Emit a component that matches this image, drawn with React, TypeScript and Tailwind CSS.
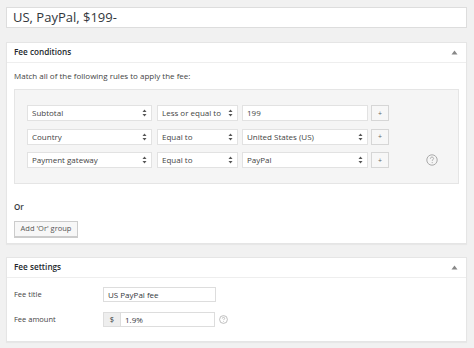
import React from "react";

const font = { fontFamily: '"Open Sans", "Liberation Sans", sans-serif' };

function UpDown() {
  return (
    <svg width="5" height="8" viewBox="0 0 5 8" className="shrink-0">
      <path d="M2.5 0.5 L4.5 3 L0.5 3 Z" fill="#555" />
      <path d="M2.5 7.5 L4.5 5 L0.5 5 Z" fill="#555" />
    </svg>
  );
}

function Caret() {
  return (
    <svg width="7" height="5" viewBox="0 0 7 5">
      <path d="M3.5 0.5 L6.5 4.5 L0.5 4.5 Z" fill="#888" />
    </svg>
  );
}

function Help({ size = 11 }: { size?: number }) {
  return (
    <svg width={size} height={size} viewBox="0 0 12 12">
      <circle cx="6" cy="6" r="5.2" fill="none" stroke="#aaa" strokeWidth="1" />
      <path d="M4.4 4.7 C4.4 3.6 5.1 3.1 6 3.1 C6.9 3.1 7.6 3.7 7.6 4.5 C7.6 5.5 6.2 5.6 6.2 6.8" fill="none" stroke="#aaa" strokeWidth="1" />
      <circle cx="6.2" cy="8.6" r="0.6" fill="#aaa" />
    </svg>
  );
}

function Select({ label, w }: { label: string; w: string }) {
  return (
    <div className={`${w} h-[16px] flex items-center justify-between bg-white border border-[#e2e2e2] pl-[4px] pr-[4px] text-[8px] text-[#444] whitespace-nowrap`}>
      <span>{label}</span>
      <UpDown />
    </div>
  );
}

function PlusBtn() {
  return (
    <div className="w-[18px] h-[16px] flex items-center justify-center bg-[#f7f7f7] border border-[#d6d6d6] text-[7px] text-[#666] leading-none">
      +
    </div>
  );
}

function PanelHeader({ title }: { title: string }) {
  return (
    <div className="h-[20px] flex items-center justify-between pl-[7px] pr-[8px] border-b border-[#eee]">
      <span className="text-[8.2px] font-semibold text-[#23282d]">{title}</span>
      <Caret />
    </div>
  );
}

export default function App() {
  return (
    <div style={font} className="w-[474px] h-[348px] bg-[#f1f1f1] pt-[7px] pl-[6px] pr-[7px] overflow-hidden text-[#444]">
      <div className="h-[21px] bg-white border border-[#ddd] flex items-center pl-[6px] text-[13px] text-[#32373c] leading-none">
        US, PayPal, $199-
      </div>

      <div className="mt-[14px] bg-white border border-[#e5e5e5] shadow-[0_1px_1px_rgba(0,0,0,0.04)]">
        <PanelHeader title="Fee conditions" />
        <div className="px-[7px] pb-[6px]">
          <div className="h-[26px] flex items-center text-[8px]">Match all of the following rules to apply the fee:</div>
          <div className="bg-[#f5f5f5] border border-[#e5e5e5] pl-[12px] pt-[15px] pb-[15px] flex flex-col gap-[7.5px]">
            <div className="flex items-center">
              <Select label="Subtotal" w="w-[125px]" />
              <div className="w-[5px]" />
              <Select label="Less or equal to" w="w-[81px]" />
              <div className="w-[4px]" />
              <div className="w-[126px] h-[16px] flex items-center bg-white border border-[#e2e2e2] pl-[4px] text-[8px]">199</div>
              <div className="w-[3px]" />
              <PlusBtn />
            </div>
            <div className="flex items-center">
              <Select label="Country" w="w-[125px]" />
              <div className="w-[5px]" />
              <Select label="Equal to" w="w-[81px]" />
              <div className="w-[4px]" />
              <Select label="United States (US)" w="w-[126px]" />
              <div className="w-[3px]" />
              <PlusBtn />
            </div>
            <div className="flex items-center">
              <Select label="Payment gateway" w="w-[125px]" />
              <div className="w-[5px]" />
              <Select label="Equal to" w="w-[81px]" />
              <div className="w-[4px]" />
              <Select label="PayPal" w="w-[126px]" />
              <div className="w-[3px]" />
              <PlusBtn />
              <div className="ml-[37px]">
                <Help size={12} />
              </div>
            </div>
          </div>
          <div className="mt-[17px] h-[12px] flex items-center text-[8px] font-semibold text-[#32373c]">Or</div>
          <div className="mt-[8px] w-[64px] h-[16px] flex items-center justify-center bg-[#f7f7f7] border border-[#ccc] text-[7.5px] text-[#555] shadow-[0_1px_0_#ccc]">
            Add 'Or' group
          </div>
        </div>
      </div>

      <div className="mt-[13px] bg-white border border-[#e5e5e5] shadow-[0_1px_1px_rgba(0,0,0,0.04)]">
        <PanelHeader title="Fee settings" />
        <div className="px-[7px] pt-[9px] pb-[14px] flex flex-col gap-[10px]">
          <div className="flex items-center">
            <div className="w-[89px] text-[7.5px]">Fee title</div>
            <div className="w-[113px] h-[15px] flex items-center bg-white border border-[#ddd] pl-[4px] text-[8px] text-[#32373c]">US PayPal fee</div>
          </div>
          <div className="flex items-center">
            <div className="w-[89px] text-[7.5px]">Fee amount</div>
            <div className="w-[112px] h-[15px] flex items-center bg-white border border-[#ddd] text-[8px] text-[#32373c]">
              <div className="w-[17px] h-full flex items-center justify-center bg-[#eee] border-r border-[#ddd] text-[7.5px]">$</div>
              <span className="pl-[4px]">1.9%</span>
            </div>
            <div className="ml-[4px]">
              <Help size={9} />
            </div>
          </div>
        </div>
      </div>
    </div>
  );
}
